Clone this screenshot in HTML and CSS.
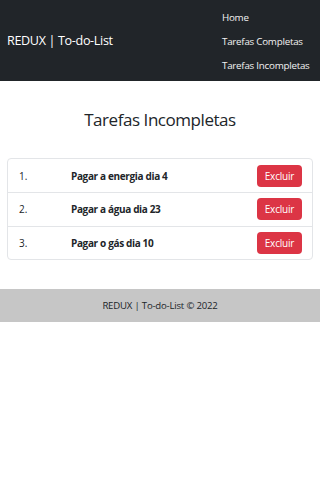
FILE: index.html
```html
<!DOCTYPE html>
<html lang="pt-BR">
<head>
<meta charset="utf-8">
<title>REDUX | To-do-List</title>
<link rel="stylesheet" href="styles.css">
</head>
<body>
<header class="navbar">
  <a class="brand" href="#">REDUX | To-do-List</a>
  <nav class="nav">
    <a class="nav-link" href="#">Home</a>
    <a class="nav-link" href="#">Tarefas Completas</a>
    <a class="nav-link" href="#">Tarefas Incompletas</a>
  </nav>
</header>
<main class="main">
  <h2 class="title">Tarefas Incompletas</h2>
  <ul class="list">
    <li class="item"><span class="idx">1.</span><span class="task">Pagar a energia dia 4</span><button class="btn">Excluir</button></li>
    <li class="item"><span class="idx">2.</span><span class="task">Pagar a água dia 23</span><button class="btn">Excluir</button></li>
    <li class="item"><span class="idx">3.</span><span class="task">Pagar o gás dia 10</span><button class="btn">Excluir</button></li>
  </ul>
</main>
<footer class="footer">REDUX | To-do-List © 2022</footer>
</body>
</html>
```
FILE: styles.css
```css
* { box-sizing: border-box; }
html, body { margin: 0; padding: 0; background: #fff; }
body {
  font-family: "Open Sans", "Noto Sans", sans-serif;
  color: #212529;
}
a { text-decoration: none; }
.navbar {
  background: #212529;
  height: 81px;
  display: flex;
  align-items: center;
  justify-content: space-between;
  padding: 0 10px 0 7px;
}
.brand {
  color: #fff;
  font-size: 12.6px;
  letter-spacing: -0.35px;
  font-weight: 500;
}
.nav {
  display: flex;
  flex-direction: column;
  width: 88px;
  padding-top: 2px;
}
.nav-link {
  color: #f2f2f2;
  font-size: 9.8px;
  line-height: 24px;
  letter-spacing: -0.25px;
  white-space: nowrap;
  font-weight: 500;
}
.main {
  padding: 26px 7px 29px;
}
.title {
  margin: 0 0 25px;
  text-align: center;
  font-weight: 500;
  font-size: 17px;
  line-height: 26px;
  letter-spacing: -0.45px;
}
.list {
  list-style: none;
  margin: 0;
  padding: 0;
  border: 1px solid #e3e5e8;
  border-radius: 4px;
}
.item {
  display: flex;
  align-items: center;
  height: 33.3px;
  padding: 0 10px 0 11px;
  border-top: 1px solid #e3e5e8;
  font-size: 10px;
}
.item:first-child { border-top: 0; }
.idx { width: 52px; }
.task {
  flex: 1;
  font-weight: 700;
  letter-spacing: -0.35px;
}
.btn {
  background: #dc3545;
  color: #fff;
  border: 0;
  border-radius: 4px;
  font-family: inherit;
  font-size: 10px;
  width: 45px;
  height: 22px;
  padding: 0;
  letter-spacing: -0.2px;
}
.footer {
  background: #c6c6c6;
  height: 33px;
  display: flex;
  align-items: center;
  justify-content: center;
  font-size: 9.6px;
  letter-spacing: -0.2px;
}
```
